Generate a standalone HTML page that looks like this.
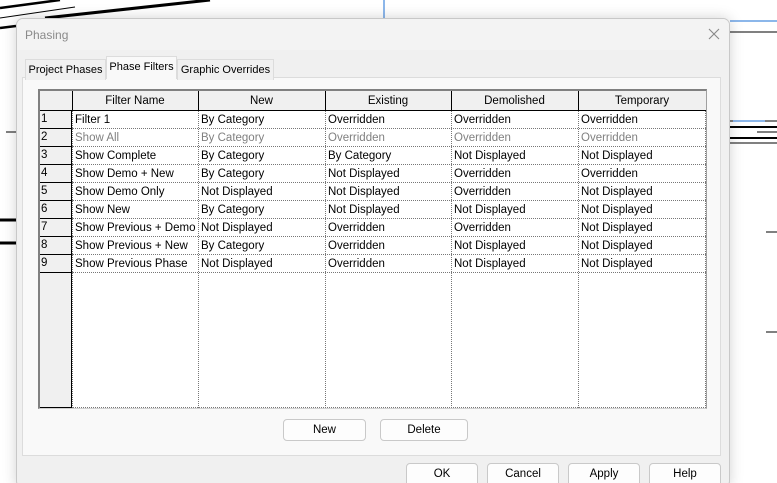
<!DOCTYPE html>
<html><head><meta charset="utf-8"><style>
*{box-sizing:border-box;margin:0;padding:0}
html,body{width:777px;height:483px;overflow:hidden}
body{background:#fff;position:relative;font-family:"Liberation Sans",sans-serif;font-size:11.5px;color:#000}
.a{position:absolute}
.dlg{left:16px;top:18px;width:714px;height:470px;background:#f0f0f0;border:1px solid #c8c8c8;border-radius:7px;box-shadow:0 0 14px rgba(0,0,0,.18);overflow:hidden}
.title{left:0;top:0;width:100%;height:31px;background:#f3f3f3}
.tab{top:39px;height:21px;font-size:11px;padding-top:4px;text-align:center;border:1px solid #dcdcdc;border-bottom:none;background:#f0f0f0;white-space:nowrap;overflow:hidden}
.panel{left:5px;top:58px;width:699px;height:379px;background:#f9f9f9;border:1px solid #dcdcdc}
.cell{position:absolute;height:18px;line-height:17px;padding-left:3px;white-space:nowrap;overflow:hidden}
.btn{position:absolute;height:22px;border:1px solid #c9c9c9;border-radius:4px;background:#fdfdfd;text-align:center;line-height:20px;font-size:11.5px}
.ln{position:absolute;background:#000}
</style></head><body>
<svg class="a" style="left:0;top:0" width="777" height="483">
<line x1="0" y1="8" x2="60" y2="0" stroke="#000" stroke-width="2.5"/>
<line x1="0" y1="18" x2="75" y2="7" stroke="#000" stroke-width="1"/>
<line x1="45" y1="18" x2="210" y2="0" stroke="#000" stroke-width="3"/>
<line x1="0" y1="28" x2="16" y2="26" stroke="#000" stroke-width="2.5"/>
<line x1="384" y1="0" x2="384" y2="18" stroke="#1a6fd6" stroke-width="1"/>
<line x1="730" y1="21" x2="777" y2="21" stroke="#1a6fd6" stroke-width="1"/>
<line x1="730" y1="32" x2="777" y2="32" stroke="#000" stroke-width="1"/>
<line x1="730" y1="121" x2="777" y2="121" stroke="#000" stroke-width="1"/>
<line x1="733" y1="121" x2="765" y2="121" stroke="#1a6fd6" stroke-width="1"/>
<line x1="730" y1="127" x2="777" y2="127" stroke="#000" stroke-width="2"/>
<line x1="757" y1="132" x2="777" y2="132" stroke="#000" stroke-width="1"/>
<line x1="730" y1="138" x2="777" y2="138" stroke="#000" stroke-width="2"/>
<line x1="730" y1="143" x2="777" y2="143" stroke="#000" stroke-width="1"/>
<line x1="766" y1="232" x2="777" y2="232" stroke="#000" stroke-width="1"/>
<line x1="766" y1="332" x2="777" y2="332" stroke="#000" stroke-width="1"/>
<line x1="0" y1="220" x2="16" y2="220" stroke="#000" stroke-width="3"/>
<line x1="0" y1="243" x2="16" y2="243" stroke="#000" stroke-width="3"/>
<line x1="6" y1="132" x2="16" y2="132" stroke="#000" stroke-width="1"/>
</svg>
<div class="a dlg">
 <div class="a title"></div>
 <div class="a" style="left:8px;top:9px;font-size:12px;color:#8a8a8a">Phasing</div>
 <svg class="a" style="left:691px;top:9px" width="12" height="12"><path d="M1 1L11 11M11 1L1 11" stroke="#888" stroke-width="1.1"/></svg>
 <div class="a panel"></div>
 <div class="a tab" style="left:8px;width:81px;top:40px">Project Phases</div>
 <div class="a tab" style="left:89px;width:71px;top:37px;height:23px;background:#f9f9f9;padding-top:4px">Phase Filters</div>
 <div class="a tab" style="left:160px;width:97px;top:40px">Graphic Overrides</div>
</div>
<div class="a" style="left:38px;top:89px;width:669px;height:320px;background:#fff;border-left:2px solid #808080;border-top:2px solid #808080;border-right:1px solid #a0a0a0;border-bottom:1px solid #d0d0d0"></div>
<div class="a" style="left:40px;top:91px;width:666px;height:20px;background:#f0f0f0;border-bottom:1px solid #000"></div>
<div class="a" style="left:40px;top:111px;width:32px;height:297px;background:#f0f0f0;border-right:1px solid #000;border-bottom:1px solid #000"></div>
<div id="g"></div>
<div class="btn" style="left:283px;top:419px;width:83px">New</div>
<div class="btn" style="left:380px;top:419px;width:88px">Delete</div>
<div class="btn" style="left:406px;top:463px;width:72px;height:26px">OK</div>
<div class="btn" style="left:487px;top:463px;width:72px;height:26px">Cancel</div>
<div class="btn" style="left:568px;top:463px;width:72px;height:26px">Apply</div>
<div class="btn" style="left:649px;top:463px;width:72px;height:26px">Help</div>
<script>
var cols=[72,198,325,451,578,706];
var H=["Filter Name","New","Existing","Demolished","Temporary"];
var R=[["Filter 1","By Category","Overridden","Overridden","Overridden"],
["Show All","By Category","Overridden","Overridden","Overridden"],
["Show Complete","By Category","By Category","Not Displayed","Not Displayed"],
["Show Demo + New","By Category","Not Displayed","Overridden","Overridden"],
["Show Demo Only","Not Displayed","Not Displayed","Overridden","Not Displayed"],
["Show New","By Category","Not Displayed","Not Displayed","Not Displayed"],
["Show Previous + Demo","Not Displayed","Overridden","Overridden","Not Displayed"],
["Show Previous + New","By Category","Overridden","Not Displayed","Not Displayed"],
["Show Previous Phase","Not Displayed","Overridden","Not Displayed","Not Displayed"]];
var h="";
for(var c=0;c<5;c++){
 h+='<div class="cell" style="left:'+cols[c]+'px;top:92px;width:'+(cols[c+1]-cols[c])+'px;text-align:center;padding:0;line-height:19px">'+H[c]+'</div>';
 h+='<div class="ln" style="left:'+cols[c]+'px;top:91px;width:1px;height:20px"></div>';
 h+='<div class="a" style="left:'+cols[c]+'px;top:111px;height:297px;border-left:1px dotted #777"></div>';
}
h+='<div class="a" style="left:705px;top:111px;height:297px;border-left:1px dotted #777"></div>';
for(var r=0;r<9;r++){
 var y=111+r*18;
 h+='<div class="cell" style="left:40px;top:'+y+'px;width:32px;padding-left:1px">'+(r+1)+'</div>';
 h+='<div class="ln" style="left:40px;top:'+(y+17)+'px;width:32px;height:1px"></div>';
 h+='<div class="a" style="left:72px;top:'+(y+17)+'px;width:634px;border-top:1px dotted #777"></div>';
 for(var c=0;c<5;c++){
  h+='<div class="cell" style="left:'+(cols[c]+1)+'px;top:'+(y+1)+'px;width:'+(cols[c+1]-cols[c]-1)+'px;padding-left:2px;'+(r==1?'color:#808080':'')+'">'+R[r][c]+'</div>';
 }
}
h+='<div class="a" style="left:72px;top:407px;width:634px;border-top:1px dotted #777"></div>';
document.getElementById("g").innerHTML=h;
</script>
</body></html>
